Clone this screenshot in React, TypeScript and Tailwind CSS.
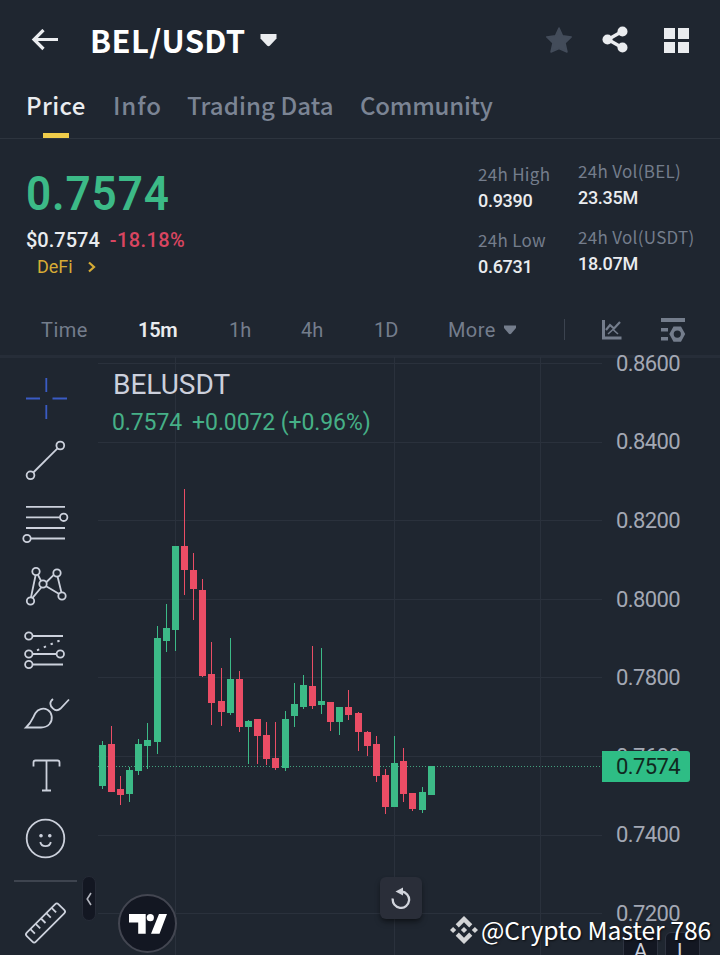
import type { ReactNode } from "react";

// [center x, high, body top, body bottom, low, rising]
type Candle = [number, number, number, number, number, boolean];

const candles: Candle[] = [
  [102, 741, 745, 786, 789, true],
  [111, 726, 744, 792, 792, false],
  [120, 776, 789, 795, 805, false],
  [129, 767, 770, 794, 802, true],
  [138, 739, 744, 771, 775, true],
  [147, 723, 740, 746, 769, true],
  [157, 626, 638, 742, 754, true],
  [166, 604, 628, 641, 652, true],
  [175, 546, 546, 630, 651, true],
  [184, 489, 546, 570, 595, false],
  [193, 553, 570, 589, 620, false],
  [202, 579, 590, 676, 677, false],
  [211, 642, 674, 703, 725, false],
  [221, 668, 701, 712, 726, false],
  [230, 638, 679, 713, 715, true],
  [239, 671, 679, 727, 732, false],
  [248, 720, 721, 727, 764, true],
  [257, 719, 719, 736, 764, false],
  [266, 722, 735, 759, 765, false],
  [275, 722, 758, 768, 770, false],
  [285, 711, 719, 768, 771, true],
  [294, 683, 704, 716, 727, true],
  [303, 675, 685, 707, 709, true],
  [312, 646, 686, 706, 709, false],
  [321, 648, 701, 705, 714, true],
  [330, 702, 702, 722, 731, false],
  [339, 707, 707, 722, 735, true],
  [348, 690, 707, 715, 720, false],
  [358, 712, 713, 732, 751, false],
  [367, 731, 732, 746, 756, false],
  [376, 736, 744, 776, 782, false],
  [385, 769, 775, 807, 814, false],
  [394, 736, 763, 807, 807, true],
  [403, 748, 761, 794, 802, false],
  [412, 793, 793, 809, 811, false],
  [422, 787, 792, 810, 813, true],
  [431, 766, 766, 795, 795, true],
];

const gridY = [363, 442, 520, 599, 677, 756, 835, 913];
const gridX = [175, 394, 540];
const prices = ["0.8600", "0.8400", "0.8200", "0.8000", "0.7800", "0.7600", "0.7400", "0.7200"];

function Tool({ children, color = "text-[#ccd1dc]" }: { children: ReactNode; color?: string }) {
  return (
    <button className={`flex h-[63px] w-[60px] shrink-0 items-center justify-center ${color}`}>
      <svg width="60" height="60" viewBox="0 0 60 60" fill="none" stroke="currentColor" strokeWidth="1.8">
        {children}
      </svg>
    </button>
  );
}

function Header() {
  return (
    <header className="flex h-20 items-center pl-[31px] pr-[31px]">
      <svg width="28" height="22" viewBox="0 0 28 22" fill="none" stroke="#eaecef" strokeWidth="3.2">
        <path d="M27 10.5H3M12.5 1L3 10.5L12.5 20" />
      </svg>
      <h1 className="ml-[31px] font-['Noto_Sans_CJK_SC'] text-[31px] leading-[40px] font-bold tracking-[0.35px] text-white">
        BEL/USDT
      </h1>
      <svg className="ml-[14px]" width="17" height="13" viewBox="0 0 17 13" fill="#eaecef">
        <path d="M0.5 0H16.5V4.5L10 11.5Q8.5 13 7 11.5L0.5 4.5Z" />
      </svg>
      <div className="ml-auto flex items-center">
        <svg width="28" height="28" viewBox="0 0 28 28" fill="#434c5a" stroke="#434c5a" strokeWidth="1.5" strokeLinejoin="round">
          <path d="M14 2L17.5 9.8L26.2 10.9L20 17L22 26L14 22.6L6 26L8 17L1.8 10.9L10.5 9.8Z" />
        </svg>
        <svg className="ml-[29px]" width="26" height="28" viewBox="0 0 26 28" fill="#eaecef" stroke="#eaecef">
          <path d="M6 13.5L20 5.5M6 13.5L20 21.5" strokeWidth="3.4" />
          <circle cx="5.5" cy="13.5" r="5" stroke="none" />
          <circle cx="20.5" cy="5.5" r="5" stroke="none" />
          <circle cx="20.5" cy="21.5" r="5" stroke="none" />
        </svg>
        <div className="ml-9 grid grid-cols-2 gap-[3px]">
          <span className="size-[11px] bg-[#eaecef]" />
          <span className="size-[11px] bg-[#eaecef]" />
          <span className="size-[11px] bg-[#eaecef]" />
          <span className="size-[11px] bg-[#eaecef]" />
        </div>
      </div>
    </header>
  );
}

function Tabs() {
  return (
    <nav className="flex h-[59px] border-b border-[#2d343e] pl-[26px] font-['Noto_Sans_CJK_SC'] text-[24px] leading-[50px] font-medium whitespace-nowrap text-[#7b8494]">
      <div className="flex w-[87px] flex-col">
        <span className="h-[53px] tracking-[0.4px] text-[#eaecef]">Price</span>
        <span className="ml-[17px] h-[5px] w-[26px] shrink-0 bg-[#f0cc4a]" />
      </div>
      <span className="w-[74px] tracking-[0.9px]">Info</span>
      <span className="w-[173px] tracking-[0.1px]">Trading Data</span>
      <span className="tracking-[-0.25px]">Community</span>
    </nav>
  );
}

function Stat({ label, value }: { label: string; value: string }) {
  return (
    <div className="h-[66px] whitespace-nowrap">
      <div className="font-['Noto_Sans_CJK_SC'] text-[17px] leading-[24px] tracking-[0.3px] text-[#747d8c]">{label}</div>
      <div className="mt-[2px] text-[18px] leading-[26px] font-medium tracking-[-0.3px] text-[#eaecef]">{value}</div>
    </div>
  );
}

function Summary() {
  return (
    <section className="flex h-[164px]">
      <div className="w-[478px] pl-[26px] pt-7">
        <div className="w-fit origin-left scale-x-90 text-[49px] leading-[54px] font-semibold tracking-[1px] text-[#3cba87]">0.7574</div>
        <div className="mt-[5px] flex gap-[10px] text-[20px] leading-[28px] font-medium">
          <span className="text-[#eaecef]">$0.7574</span>
          <span className="tracking-[0.4px] text-[#d94560]">-18.18%</span>
        </div>
        <div className="mt-px flex items-center pl-[11px] text-[18px] leading-[24px] text-[#d6ac35]">
          DeFi
          <svg className="ml-[15px]" width="8" height="12" viewBox="0 0 8 12" fill="none" stroke="currentColor" strokeWidth="2.2">
            <path d="M1 1.5L6 6L1 10.5" />
          </svg>
        </div>
      </div>
      <div className="w-[100px] pt-[23px]">
        <Stat label="24h High" value="0.9390" />
        <Stat label="24h Low" value="0.6731" />
      </div>
      <div className="pt-5">
        <Stat label="24h Vol(BEL)" value="23.35M" />
        <Stat label="24h Vol(USDT)" value="18.07M" />
      </div>
    </section>
  );
}

function Intervals() {
  return (
    <div className="flex h-[55px] items-center border-b-[3px] border-[#262d38] pl-[41px] pt-px text-[20px] text-[#747d8c]">
      <span className="w-[97px] tracking-[0.5px]">Time</span>
      <span className="w-[91px] font-semibold tracking-[-0.3px] text-[#eaecef]">15m</span>
      <span className="w-[72px]">1h</span>
      <span className="w-[73px]">4h</span>
      <span className="w-[74px]">1D</span>
      <span className="w-[56px] tracking-[0.4px]">More</span>
      <svg width="12" height="10" viewBox="0 0 12 10" fill="currentColor">
        <path d="M0 0.5H12V3L7.3 8.5Q6 9.8 4.7 8.5L0 3Z" />
      </svg>
      <span className="ml-[48px] h-[21px] w-px bg-[#3b434f]" />
      <svg className="ml-[37px]" width="20" height="20" viewBox="0 0 20 20" fill="none" stroke="currentColor">
        <path d="M1.5 0V18H19.5" strokeWidth="3" />
        <path d="M4 10L8 5L12 8.5L18 2" strokeWidth="2.2" />
        <path d="M6 14L11 9.5L16 14" strokeWidth="1.6" />
      </svg>
      <svg className="ml-[38px]" width="26" height="26" viewBox="0 0 26 26" fill="currentColor">
        <path d="M1 1H25V5H1Z M1 11H8V14.5H1Z M1 20H8V23.5H1Z" />
        <path fillRule="evenodd" d="M13.5 9.5H21L25.2 17L21 24.8H13.5L9.3 17Z M17.3 13.5A3.6 3.6 0 1 0 17.3 20.7A3.6 3.6 0 1 0 17.3 13.5Z" />
      </svg>
    </div>
  );
}

function DrawingTools() {
  return (
    <aside className="relative flex w-[98px] shrink-0 flex-col pl-4 pt-[9px]">
      <Tool color="text-[#3a5bc4]">
        <path d="M30.3 10V24M30.3 37V51M10 30.5H24M36.5 30.5H51" />
      </Tool>
      <Tool>
        <circle cx="14.5" cy="44.3" r="3.9" />
        <circle cx="44.3" cy="14.5" r="3.9" />
        <path d="M17.3 41.5L41.5 17.3" />
      </Tool>
      <Tool>
        <path d="M10 12.8H49M10 23.3H43.8M10 34H49M15 44.5H49" />
        <circle cx="47.7" cy="23.3" r="3.7" />
        <circle cx="11" cy="44.5" r="3.7" />
      </Tool>
      <Tool>
        <path d="M19.6 18.3L15 40.2M22 18L25 23.8M30.5 25L37.5 18.2M41.6 19.8L45.4 35.2M30.2 29.3L42.8 36.8M25.2 30.5L16.5 40.8" />
        <circle cx="20" cy="14.5" r="3.7" />
        <circle cx="41" cy="16" r="3.7" />
        <circle cx="27" cy="27" r="3.7" />
        <circle cx="14.5" cy="44" r="3.7" />
        <circle cx="46" cy="39" r="3.7" />
      </Tool>
      <Tool>
        <circle cx="12.8" cy="16" r="3.7" />
        <circle cx="12.8" cy="34" r="3.7" />
        <circle cx="44.3" cy="34" r="3.7" />
        <circle cx="12.8" cy="44.5" r="3.7" />
        <path d="M16.7 16H47M16.7 34H40.5M16.7 44.5H47" />
        <path d="M21 30.3L46 19.5" strokeDasharray="2.4 5" strokeWidth="2" />
      </Tool>
      <Tool>
        <path d="M10 44.5C16 39 17 34 19.5 30C22 26 27 24.5 31.5 26.8C36 29.5 37.5 36 33.5 41C31 43.8 28 44.5 25 44.5Z" />
        <path d="M37 16C33 19 34 23 36.8 25.3C39.8 28.2 42 28 44.5 25.5L53 16.5" />
      </Tool>
      <Tool>
        <path d="M17.5 20.5V16.5Q17.5 14.5 19.5 14.5H41.5Q43.5 14.5 43.5 16.5V20.5M30.5 14.5V44.5M26 44.5H35" />
      </Tool>
      <Tool>
        <circle cx="29.5" cy="29.5" r="18.8" />
        <circle cx="25" cy="26.8" r="1.2" fill="currentColor" strokeWidth="1.2" />
        <circle cx="33.8" cy="26.8" r="1.2" fill="currentColor" strokeWidth="1.2" />
        <path d="M24.3 33C25.3 38.5 33.8 38.5 34.8 33" />
      </Tool>
      <span className="-ml-[2px] mt-[10px] h-[2px] w-[63px] shrink-0 bg-[#3e444f]" />
      <div className="mt-[9px]">
        <Tool>
          <g transform="translate(29.5 30) rotate(-45)">
            <rect x="-22.5" y="-6.5" width="45" height="13" rx="2.5" />
            <path d="M-15 -6V0M-7.5 -6V0M0 -6V0M7.5 -6V0M15 -6V0" />
          </g>
        </Tool>
      </div>
      <button className="absolute left-[82px] top-[519px] flex h-[45px] w-[14px] items-center justify-center rounded-[7px] border border-[#262b37] bg-[#131722]">
        <svg width="6" height="14" viewBox="0 0 6 14" fill="none" stroke="#b2b5be" strokeWidth="1.6">
          <path d="M5 1L1.2 7L5 13" />
        </svg>
      </button>
    </aside>
  );
}

function Chart() {
  return (
    <div className="relative w-[504px] shrink-0">
      <svg className="block" width="504" height="598" viewBox="98 357 504 598" shapeRendering="crispEdges">
        {gridY.map((y) => (
          <rect key={y} x="98" y={y} width="504" height="1" fill="#2a313c" />
        ))}
        {gridX.map((x) => (
          <rect key={x} x={x} y="357" width="1" height="598" fill="#2a313c" />
        ))}
        <line x1="98" y1="766.5" x2="602" y2="766.5" stroke="#43a07d" strokeDasharray="1 2" />
        {candles.map(([x, high, top, bottom, low, up]) => (
          <g key={x} fill={up ? "#3cba87" : "#ea4d65"}>
            <rect x={x} y={high} width="1" height={low - high} />
            <rect x={x - 3} y={top} width="7" height={bottom - top} />
          </g>
        ))}
      </svg>
      <div className="absolute left-[15px] top-[10px] whitespace-nowrap">
        <div className="text-[28px] leading-[36px] text-[#ccd0dc]">BELUSDT</div>
        <div className="-ml-px flex gap-[10px] text-[23px] leading-[40px] tracking-[-0.1px] text-[#46b087]">
          <span>0.7574</span>
          <span>+0.0072 (+0.96%)</span>
        </div>
      </div>
      <div className="absolute left-5 top-[537px] flex size-[59px] items-center justify-center rounded-full border-2 border-[#434651] bg-[#131722]">
        <svg width="38" height="20" viewBox="0 0 38 20" fill="#fff">
          <path d="M0 0H16.7V19.8H9.2V8.6H0Z M30 0H38L30.5 19.8H22Z" />
          <circle cx="21.3" cy="3.7" r="3.6" />
        </svg>
      </div>
      <button className="absolute left-[282px] top-[520px] flex size-[42px] items-center justify-center rounded-md bg-[#2a2e39] shadow-md shadow-black/40">
        <svg width="20" height="22" viewBox="0 0 20 22" fill="none" stroke="#d1d4dc" strokeWidth="2.3">
          <path d="M1.8 11.5A8.2 8.2 0 1 0 10.5 4.5" />
          <path d="M4.5 4.5L12 0.5V8.5Z" fill="#d1d4dc" stroke="none" />
        </svg>
      </button>
    </div>
  );
}

function PriceAxis() {
  return (
    <div className="relative flex-1">
      <div className="-mt-[33px] flex flex-col pl-[14px] text-[22px] tracking-[-0.6px] text-[#a3a8b4]">
        {prices.map((p) => (
          <span key={p} className="flex h-[78.6px] shrink-0 items-center">
            {p}
          </span>
        ))}
      </div>
      <div className="absolute left-0 top-[394px] flex h-[31px] w-[88px] items-center rounded-r-[3px] bg-[#2ebd85] pl-[14px] text-[22px] tracking-[-0.6px] text-[#10291f]">
        0.7574
      </div>
      <div className="absolute left-[21px] top-[575px] flex gap-[7px] text-[21px] leading-[36px] text-[#ccd0dc]">
        <span className="h-10 w-[35px] rounded-md border border-[#2e3340] bg-[#131722] text-center">A</span>
        <span className="h-10 w-[35px] rounded-md border border-[#2e3340] bg-[#131722] pl-[11px]">L</span>
      </div>
    </div>
  );
}

function Watermark() {
  return (
    <div className="absolute left-[450px] top-[916px] flex items-center whitespace-nowrap text-white">
      <svg width="28" height="28" viewBox="0 0 28 28" fill="#d3d4d6">
        <path d="M14 0L22.3 8.3L19.2 11.4L14 6.2L8.8 11.4L5.7 8.3Z" />
        <path d="M14 28L22.3 19.7L19.2 16.6L14 21.8L8.8 16.6L5.7 19.7Z" />
        <path d="M14 10.9L17.1 14L14 17.1L10.9 14Z M3.1 10.9L6.2 14L3.1 17.1L0 14Z M24.9 10.9L28 14L24.9 17.1L21.8 14Z" />
      </svg>
      <span className="-mt-[2px] ml-[3px] font-['Noto_Sans_CJK_SC'] text-[24.7px] leading-[30px] [text-shadow:1px_1px_2px_rgba(0,0,0,0.7)]">
        @Crypto Master 786
      </span>
    </div>
  );
}

export default function App() {
  return (
    <main className="relative flex h-[955px] w-[720px] flex-col overflow-hidden bg-[#1f2630] font-['Roboto',sans-serif]">
      <Header />
      <Tabs />
      <Summary />
      <Intervals />
      <div className="-mt-px flex h-[598px]">
        <DrawingTools />
        <Chart />
        <PriceAxis />
      </div>
      <Watermark />
    </main>
  );
}
